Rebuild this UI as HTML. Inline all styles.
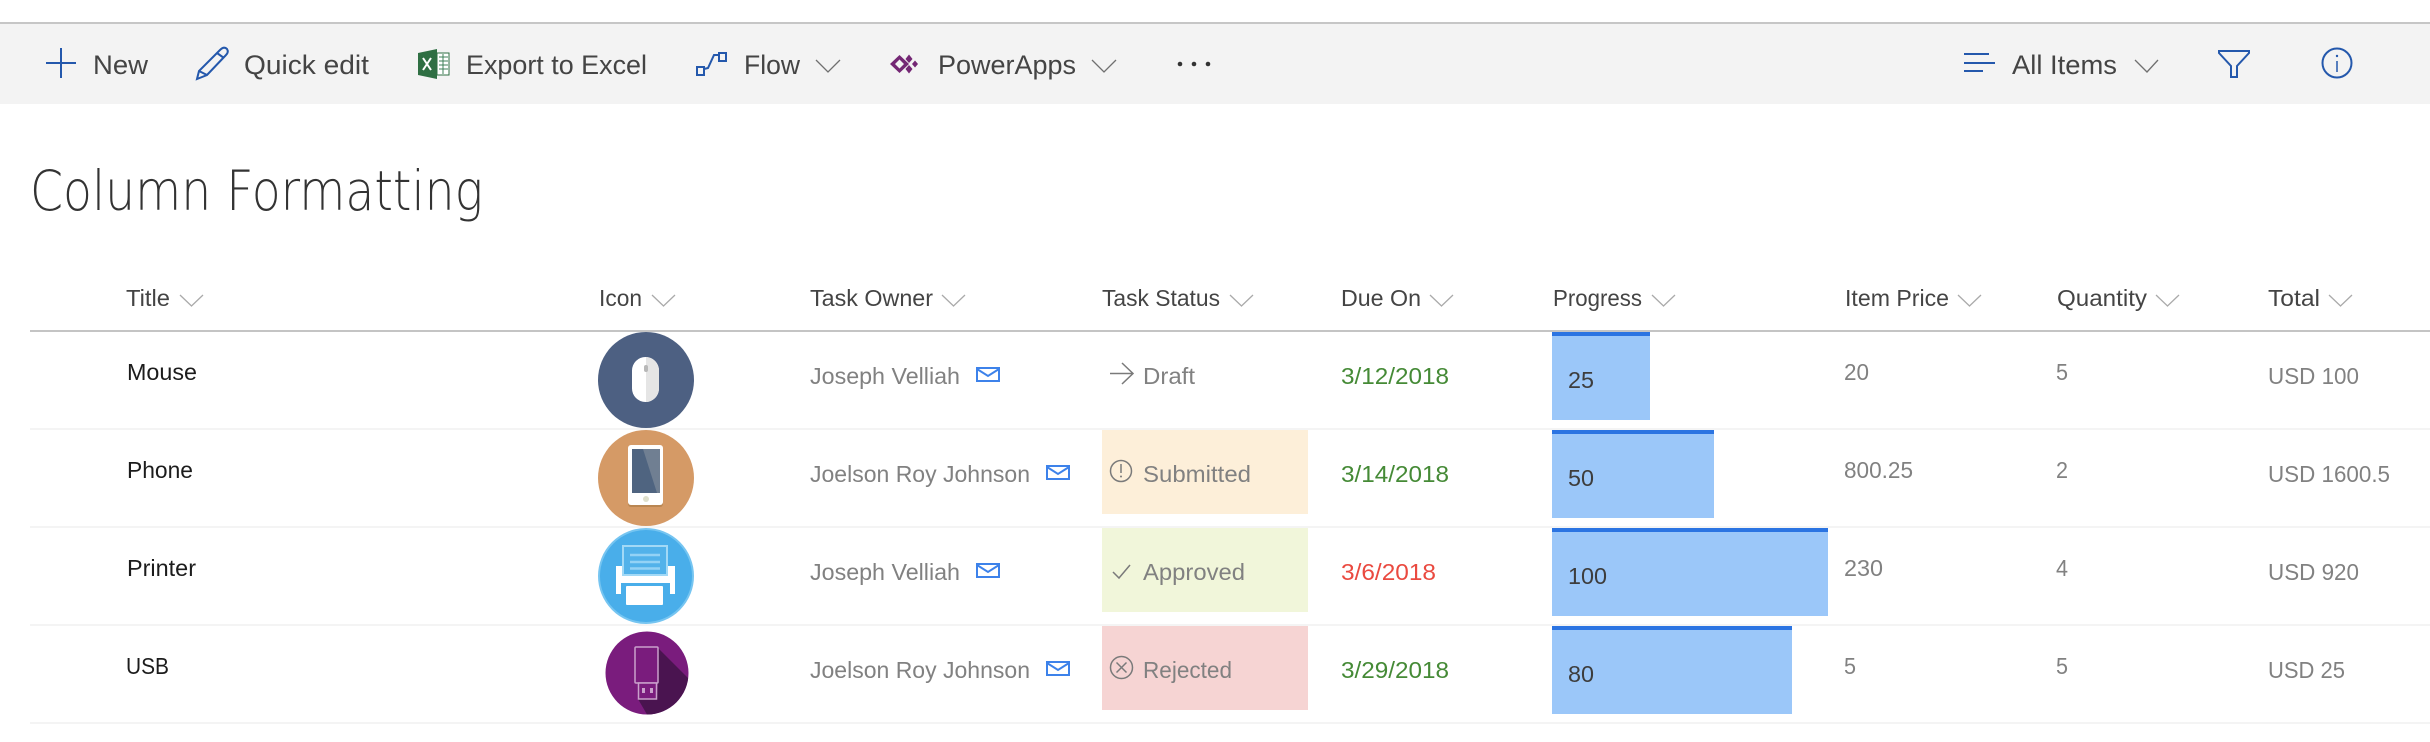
<!DOCTYPE html>
<html lang="en"><head><meta charset="utf-8"><title>Column Formatting</title>
<style>
html,body{margin:0;padding:0;background:#fff;width:2430px;height:742px;overflow:hidden}
svg{display:block}
text{font-family:"Liberation Sans",Arial,sans-serif}
.tb{font-size:27px;fill:#444}
.h{font-size:23.500px;fill:#444}
.t{font-size:23.500px;fill:#1c1c1c}
.g{font-size:23.500px;fill:#818181}
.s{font-size:23.500px;fill:#818181}
.p{font-size:23.500px;fill:#3d3d3d}
.dg{font-size:23.500px;fill:#458a36}
.dr{font-size:23.500px;fill:#ea4a40}
.ch{fill:none;stroke:#707070;stroke-width:1.300}
.hc{fill:none;stroke:#aaa;stroke-width:1.300}
.ic{fill:none;stroke:#2458ac;stroke-width:2}
.m{fill:none;stroke:#3d82ea;stroke-width:2}
.si{fill:none;stroke:#7a7a7a;stroke-width:1.500}
</style></head><body>
<svg xmlns="http://www.w3.org/2000/svg" width="2430" height="742" viewBox="0 0 2430 742">
<rect width="2430" height="742" fill="#fff"/>
<rect y="24" width="2430" height="80" fill="#f3f3f3"/>
<rect y="22" width="2430" height="2" fill="#c6c6c6"/>

<!-- toolbar -->
<path class="ic" d="M46 63H76M61 48V78"/>
<text class="tb" x="93" y="74" textLength="55" lengthAdjust="spacingAndGlyphs">New</text>
<path class="ic" d="M197 79L199 71L220 50Q224 46 227 49Q229 52 226 55L207 75ZM199 71L207 75M217 53L224 58"/>
<text class="tb" x="244" y="74" textLength="125" lengthAdjust="spacingAndGlyphs">Quick edit</text>
<path d="M418 53L437 49V79L418 75Z" fill="#2f6f43"/>
<rect x="437" y="53" width="12" height="22" fill="#fff" stroke="#2f6f43" stroke-width="1"/>
<path d="M439 57H448M439 61H448M439 65H448M439 69H448M443 54V74" stroke="#3f8058" stroke-width="1" fill="none"/>
<path d="M423 58L431 70M431 58L423 70" stroke="#fff" stroke-width="2" fill="none"/>
<text class="tb" x="466" y="74" textLength="181" lengthAdjust="spacingAndGlyphs">Export to Excel</text>
<path class="ic" d="M697 67h7v8h-7zM719 53h7v8h-7zM704 69L708 68L714 55L719 55"/>
<text class="tb" x="744" y="74" textLength="56" lengthAdjust="spacingAndGlyphs">Flow</text>
<polyline class="ch" points="816,60 828,72 840,60"/>
<path fill-rule="evenodd" d="M899.500 55L909 64L899.500 73L890 64ZM899.500 59.500L895 64L899.500 68.500L904 64Z" fill="#742774"/>
<path d="M909 54.500L912.500 59L909 63L905.500 59ZM909 65L912.500 69L909 73.500L905.500 69ZM915 60.500L918 64L915 67.500L912 64Z" fill="#742774"/>
<text class="tb" x="938" y="74" textLength="138" lengthAdjust="spacingAndGlyphs">PowerApps</text>
<polyline class="ch" points="1092,60 1104,72 1116,60"/>
<circle cx="1180" cy="64" r="2.300" fill="#333"/><circle cx="1194" cy="64" r="2.300" fill="#333"/><circle cx="1208" cy="64" r="2.300" fill="#333"/>
<path class="ic" d="M1964 54H1989M1964 63H1995M1964 71H1983"/>
<text class="tb" x="2012" y="74" textLength="105" lengthAdjust="spacingAndGlyphs">All Items</text>
<polyline class="ch" points="2135,60 2147,72 2158,60"/>
<path class="ic" d="M2219 51H2249V53L2237 66V77H2231V66L2219 53Z"/>
<ellipse class="ic" cx="2337" cy="63" rx="14.500" ry="14.500"/>
<path d="M2337 61V72" stroke="#2458ac" stroke-width="1.500"/><circle cx="2337" cy="56" r="1.200" fill="#2458ac"/>

<!-- page title -->
<text x="30" y="210" textLength="453" lengthAdjust="spacingAndGlyphs" style="font-family:'DejaVu Sans ExtraLight','DejaVu Sans','Liberation Sans',sans-serif;font-weight:200;font-size:55px;fill:#333">Column Formatting</text>

<!-- header -->
<text class="h" x="126" y="306" textLength="44" lengthAdjust="spacingAndGlyphs">Title</text><polyline class="hc" points="180,295 191.500,306 203,295"/>
<text class="h" x="599" y="306" textLength="43" lengthAdjust="spacingAndGlyphs">Icon</text><polyline class="hc" points="652,295 663.500,306 675,295"/>
<text class="h" x="810" y="306" textLength="123" lengthAdjust="spacingAndGlyphs">Task Owner</text><polyline class="hc" points="942,295 953.500,306 965,295"/>
<text class="h" x="1102" y="306" textLength="118" lengthAdjust="spacingAndGlyphs">Task Status</text><polyline class="hc" points="1230,295 1241.500,306 1253,295"/>
<text class="h" x="1341" y="306" textLength="80" lengthAdjust="spacingAndGlyphs">Due On</text><polyline class="hc" points="1430,295 1441.500,306 1453,295"/>
<text class="h" x="1553" y="306" textLength="89" lengthAdjust="spacingAndGlyphs">Progress</text><polyline class="hc" points="1652,295 1663.500,306 1675,295"/>
<text class="h" x="1845" y="306" textLength="104" lengthAdjust="spacingAndGlyphs">Item Price</text><polyline class="hc" points="1958,295 1969.500,306 1981,295"/>
<text class="h" x="2057" y="306" textLength="90" lengthAdjust="spacingAndGlyphs">Quantity</text><polyline class="hc" points="2156,295 2167.500,306 2179,295"/>
<text class="h" x="2268" y="306" textLength="52" lengthAdjust="spacingAndGlyphs">Total</text><polyline class="hc" points="2329,295 2340.500,306 2352,295"/>

<!-- lines -->
<rect x="30" y="330" width="2400" height="2" fill="#c4c4c4"/>
<rect x="30" y="428" width="2400" height="2" fill="#f4f4f4"/>
<rect x="30" y="526" width="2400" height="2" fill="#f4f4f4"/>
<rect x="30" y="624" width="2400" height="2" fill="#f4f4f4"/>
<rect x="30" y="722" width="2400" height="2" fill="#f4f4f4"/>

<!-- title column -->
<text class="t" x="127" y="380" textLength="70" lengthAdjust="spacingAndGlyphs">Mouse</text>
<text class="t" x="127" y="478" textLength="66" lengthAdjust="spacingAndGlyphs">Phone</text>
<text class="t" x="127" y="576" textLength="69" lengthAdjust="spacingAndGlyphs">Printer</text>
<text class="t" x="126" y="674" textLength="43" lengthAdjust="spacingAndGlyphs">USB</text>

<!-- icon: mouse -->
<circle cx="646" cy="380" r="48" fill="#4d6082"/>
<rect x="632" y="357" width="27" height="45" rx="13.500" fill="#fff"/>
<path d="M646 357A13.500 13.500 0 0 1 659 370.500V388.500A13.500 13.500 0 0 1 646 402Z" fill="#e5e5e5"/>
<rect x="644" y="365" width="4" height="7" rx="2" fill="#b8b8b8"/>
<!-- icon: phone -->
<circle cx="646" cy="478" r="48" fill="#d59a66"/>
<rect x="628" y="446" width="35" height="61" rx="3" fill="#b98652"/>
<rect x="628" y="445" width="35" height="60" rx="3" fill="#fff"/>
<rect x="632" y="449" width="28" height="44" fill="#4f6480"/>
<path d="M643 449H660V493H657Z" fill="#707f92"/>
<circle cx="646" cy="499" r="3" fill="#dfe0cc"/>
<!-- icon: printer -->
<circle cx="646" cy="576" r="47" fill="#49aeea" stroke="#76c5f1" stroke-width="2"/>
<path d="M616 566H675V594H670V583H621V594H616Z" fill="#fff"/>
<rect x="620" y="575" width="51" height="8" fill="#fff"/>
<rect x="623" y="546" width="44" height="29" fill="#52b2ea" stroke="#a2d9f6" stroke-width="2"/>
<path d="M630 555H660M630 562H660M630 568.500H660" stroke="#93d2f5" stroke-width="2.500"/>
<rect x="626" y="586" width="37" height="19" rx="1" fill="#fff"/>
<!-- icon: usb -->
<clipPath id="u"><circle cx="647" cy="673" r="41.500"/></clipPath>
<circle cx="647" cy="673" r="41.500" fill="#7a1c7d"/>
<path d="M658 648L700 690L700 730L656 730L638 699L657 699L658 683Z" fill="#4a1450" clip-path="url(#u)"/>
<rect x="635" y="647" width="23" height="36" rx="1" fill="#7a1c7d" stroke="#c9a0cb" stroke-width="1.500"/>
<rect x="638.500" y="683" width="18" height="16" fill="#7a1c7d" stroke="#c9a0cb" stroke-width="1.500"/>
<rect x="642" y="688" width="3" height="5" fill="#c9a0cb"/><rect x="650" y="688" width="3" height="5" fill="#c9a0cb"/>

<!-- owners -->
<text class="g" x="810" y="384" textLength="150" lengthAdjust="spacingAndGlyphs">Joseph Velliah</text>
<text class="g" x="810" y="482" textLength="220" lengthAdjust="spacingAndGlyphs">Joelson Roy Johnson</text>
<text class="g" x="810" y="580" textLength="150" lengthAdjust="spacingAndGlyphs">Joseph Velliah</text>
<text class="g" x="810" y="678" textLength="220" lengthAdjust="spacingAndGlyphs">Joelson Roy Johnson</text>
<path class="m" d="M977 368H999V381H977ZM977 369L988 376L999 369"/>
<path class="m" d="M1047 466H1069V479H1047ZM1047 467L1058 474L1069 467"/>
<path class="m" d="M977 564H999V577H977ZM977 565L988 572L999 565"/>
<path class="m" d="M1047 662H1069V675H1047ZM1047 663L1058 670L1069 663"/>

<!-- status -->
<rect x="1102" y="430" width="206" height="84" fill="#fdefd9"/>
<rect x="1102" y="528" width="206" height="84" fill="#f1f6da"/>
<rect x="1102" y="626" width="206" height="84" fill="#f6d4d3"/>
<path class="si" d="M1110 373.500H1133M1122 363L1133 373.500L1122 384"/>
<text class="s" x="1143" y="384" textLength="52" lengthAdjust="spacingAndGlyphs">Draft</text>
<ellipse class="si" cx="1121" cy="471" rx="10.500" ry="10.500"/>
<path d="M1121 464V473" stroke="#7a7a7a" stroke-width="1.500"/><circle cx="1121" cy="476.500" r="1" fill="#7a7a7a"/>
<text class="s" x="1143" y="482" textLength="108" lengthAdjust="spacingAndGlyphs">Submitted</text>
<path class="si" d="M1113 572L1119 578L1130 565"/>
<text class="s" x="1143" y="580" textLength="102" lengthAdjust="spacingAndGlyphs">Approved</text>
<ellipse class="si" cx="1121.500" cy="667.500" rx="11" ry="11"/>
<path class="si" d="M1116.500 662.500L1126.500 672.500M1126.500 662.500L1116.500 672.500"/>
<text class="s" x="1143" y="678" textLength="89" lengthAdjust="spacingAndGlyphs">Rejected</text>

<!-- dates -->
<text class="dg" x="1341" y="384" textLength="108" lengthAdjust="spacingAndGlyphs">3/12/2018</text>
<text class="dg" x="1341" y="482" textLength="108" lengthAdjust="spacingAndGlyphs">3/14/2018</text>
<text class="dr" x="1341" y="580" textLength="95" lengthAdjust="spacingAndGlyphs">3/6/2018</text>
<text class="dg" x="1341" y="678" textLength="108" lengthAdjust="spacingAndGlyphs">3/29/2018</text>

<!-- progress -->
<rect x="1552" y="332" width="98" height="88" fill="#9bc7f9"/><rect x="1552" y="332" width="98" height="4" fill="#2b74e2"/>
<rect x="1552" y="430" width="162" height="88" fill="#9bc7f9"/><rect x="1552" y="430" width="162" height="4" fill="#2b74e2"/>
<rect x="1552" y="528" width="276" height="88" fill="#9bc7f9"/><rect x="1552" y="528" width="276" height="4" fill="#2b74e2"/>
<rect x="1552" y="626" width="240" height="88" fill="#9bc7f9"/><rect x="1552" y="626" width="240" height="4" fill="#2b74e2"/>
<text class="p" x="1568" y="388" textLength="26" lengthAdjust="spacingAndGlyphs">25</text>
<text class="p" x="1568" y="486" textLength="26" lengthAdjust="spacingAndGlyphs">50</text>
<text class="p" x="1568" y="584" textLength="39" lengthAdjust="spacingAndGlyphs">100</text>
<text class="p" x="1568" y="682" textLength="26" lengthAdjust="spacingAndGlyphs">80</text>

<!-- price -->
<text class="g" x="1844" y="380" textLength="25" lengthAdjust="spacingAndGlyphs">20</text>
<text class="g" x="1844" y="478" textLength="69" lengthAdjust="spacingAndGlyphs">800.25</text>
<text class="g" x="1844" y="576" textLength="39" lengthAdjust="spacingAndGlyphs">230</text>
<text class="g" x="1844" y="674" textLength="12" lengthAdjust="spacingAndGlyphs">5</text>
<!-- quantity -->
<text class="g" x="2056" y="380" textLength="12" lengthAdjust="spacingAndGlyphs">5</text>
<text class="g" x="2056" y="478" textLength="12" lengthAdjust="spacingAndGlyphs">2</text>
<text class="g" x="2056" y="576" textLength="12" lengthAdjust="spacingAndGlyphs">4</text>
<text class="g" x="2056" y="674" textLength="12" lengthAdjust="spacingAndGlyphs">5</text>
<!-- total -->
<text class="g" x="2268" y="384" textLength="91" lengthAdjust="spacingAndGlyphs">USD 100</text>
<text class="g" x="2268" y="482" textLength="122" lengthAdjust="spacingAndGlyphs">USD 1600.5</text>
<text class="g" x="2268" y="580" textLength="91" lengthAdjust="spacingAndGlyphs">USD 920</text>
<text class="g" x="2268" y="678" textLength="77" lengthAdjust="spacingAndGlyphs">USD 25</text>
</svg>
</body></html>
